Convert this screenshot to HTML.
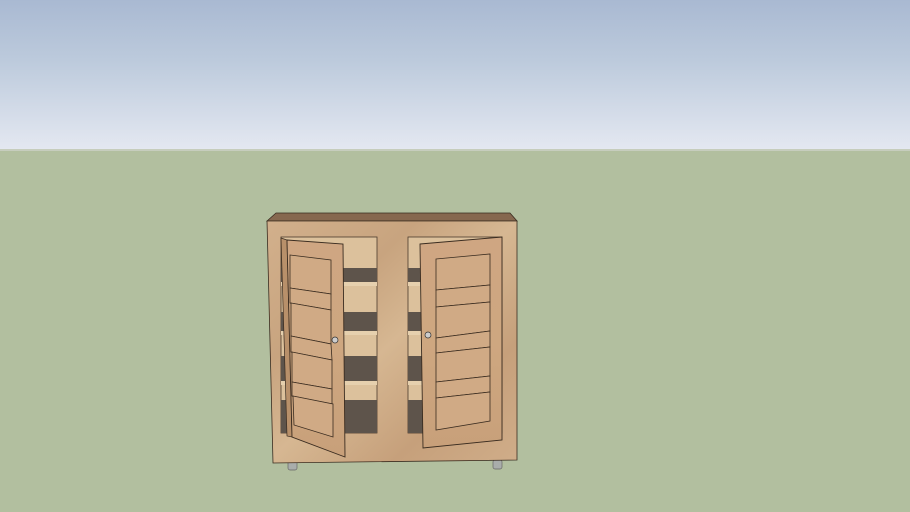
<!DOCTYPE html>
<html><head><meta charset="utf-8"><style>
html,body{margin:0;padding:0;width:910px;height:512px;overflow:hidden}
svg{display:block}
</style></head><body>
<svg width="910" height="512" viewBox="0 0 910 512" xmlns="http://www.w3.org/2000/svg">
<defs>
<linearGradient id="sky" x1="0" y1="0" x2="0" y2="1">
<stop offset="0" stop-color="#a9b9d2"/>
<stop offset="0.4" stop-color="#bccadc"/>
<stop offset="1" stop-color="#e4e8f1"/>
</linearGradient>
<linearGradient id="wood" x1="0" y1="0" x2="1" y2="1">
<stop offset="0" stop-color="#d2b08c"/>
<stop offset="0.3" stop-color="#c8a47f"/>
<stop offset="0.5" stop-color="#d6b792"/>
<stop offset="0.75" stop-color="#c6a07b"/>
<stop offset="1" stop-color="#d0ad89"/>
</linearGradient>
<linearGradient id="door" x1="0" y1="0" x2="0" y2="1">
<stop offset="0" stop-color="#cfa682"/>
<stop offset="0.5" stop-color="#cea780"/>
<stop offset="1" stop-color="#c8a07a"/>
</linearGradient>
</defs>
<rect width="910" height="150" fill="url(#sky)"/>
<rect y="150" width="910" height="362" fill="#b2bf9f"/>
<rect y="149" width="910" height="2" fill="#c6cdbd"/>
<rect x="288" y="461" width="9" height="9" rx="2" fill="#a9adab" stroke="#666" stroke-width="0.7"/>
<rect x="493" y="460" width="9" height="9" rx="2" fill="#a9adab" stroke="#666" stroke-width="0.7"/>
<polygon points="267,221 276,213 510,213 517,221" fill="#86684f" stroke="#3a2c20" stroke-width="0.8"/>
<polygon points="267,221 517,221 517,460 273,463" fill="url(#wood)" stroke="#3a2c20" stroke-width="0.8"/>
<rect x="281" y="237" width="96" height="196" fill="#dcc19c" stroke="#4a3a2c" stroke-width="0.8"/>
<rect x="408" y="237" width="94" height="196" fill="#dcc19c" stroke="#4a3a2c" stroke-width="0.8"/>
<g fill="#5e544b">
<rect x="281" y="268" width="96" height="14"/><rect x="281" y="312" width="96" height="19"/>
<rect x="281" y="356" width="96" height="25"/><rect x="281" y="400" width="96" height="33"/>
<rect x="408" y="268" width="94" height="14"/><rect x="408" y="312" width="94" height="19"/>
<rect x="408" y="356" width="94" height="25"/><rect x="408" y="400" width="94" height="33"/>
</g>
<g fill="#e6d0ae">
<rect x="281" y="282" width="96" height="4"/><rect x="281" y="331" width="96" height="4"/><rect x="281" y="381" width="96" height="4"/>
<rect x="408" y="282" width="94" height="4"/><rect x="408" y="331" width="94" height="4"/><rect x="408" y="381" width="94" height="4"/>
</g>
<polygon points="281,238 287,240 292,437 287,436" fill="#b8906a" stroke="#3a2c20" stroke-width="0.7"/>
<polygon points="287,240 343,244 345,457 292,437" fill="url(#door)" stroke="#3a2c20" stroke-width="0.9"/>
<g fill="#d0aa85" stroke="#3a2c20" stroke-width="0.8">
<polygon points="290,255 331,260 331,294 290,288"/>
<polygon points="290,288 331,294 331,310 290,303"/>
<polygon points="291,303 331,310 331,344 291,336"/>
<polygon points="291,336 331,344 332,360 291,352"/>
<polygon points="292,352 332,360 332,389 292,382"/>
<polygon points="292,382 332,389 332,404 292,396"/>
<polygon points="293,396 333,404 333,437 294,425"/>
</g>
<circle cx="335" cy="340" r="3" fill="#ccc" stroke="#333" stroke-width="0.7"/>
<polygon points="420,244 502,237 502,440 423,448" fill="url(#door)" stroke="#3a2c20" stroke-width="0.9"/>
<g fill="#d0aa85" stroke="#3a2c20" stroke-width="0.8">
<polygon points="436,259 490,254 490,285 436,290"/>
<polygon points="436,290 490,285 490,302 436,307"/>
<polygon points="436,307 490,302 490,331 436,338"/>
<polygon points="436,338 490,331 490,347 436,353"/>
<polygon points="436,353 490,347 490,376 436,382"/>
<polygon points="436,382 490,376 490,392 436,398"/>
<polygon points="436,398 490,392 490,421 436,430"/>
</g>
<circle cx="428" cy="335" r="3" fill="#ccc" stroke="#333" stroke-width="0.7"/>
</svg>
</body></html>
